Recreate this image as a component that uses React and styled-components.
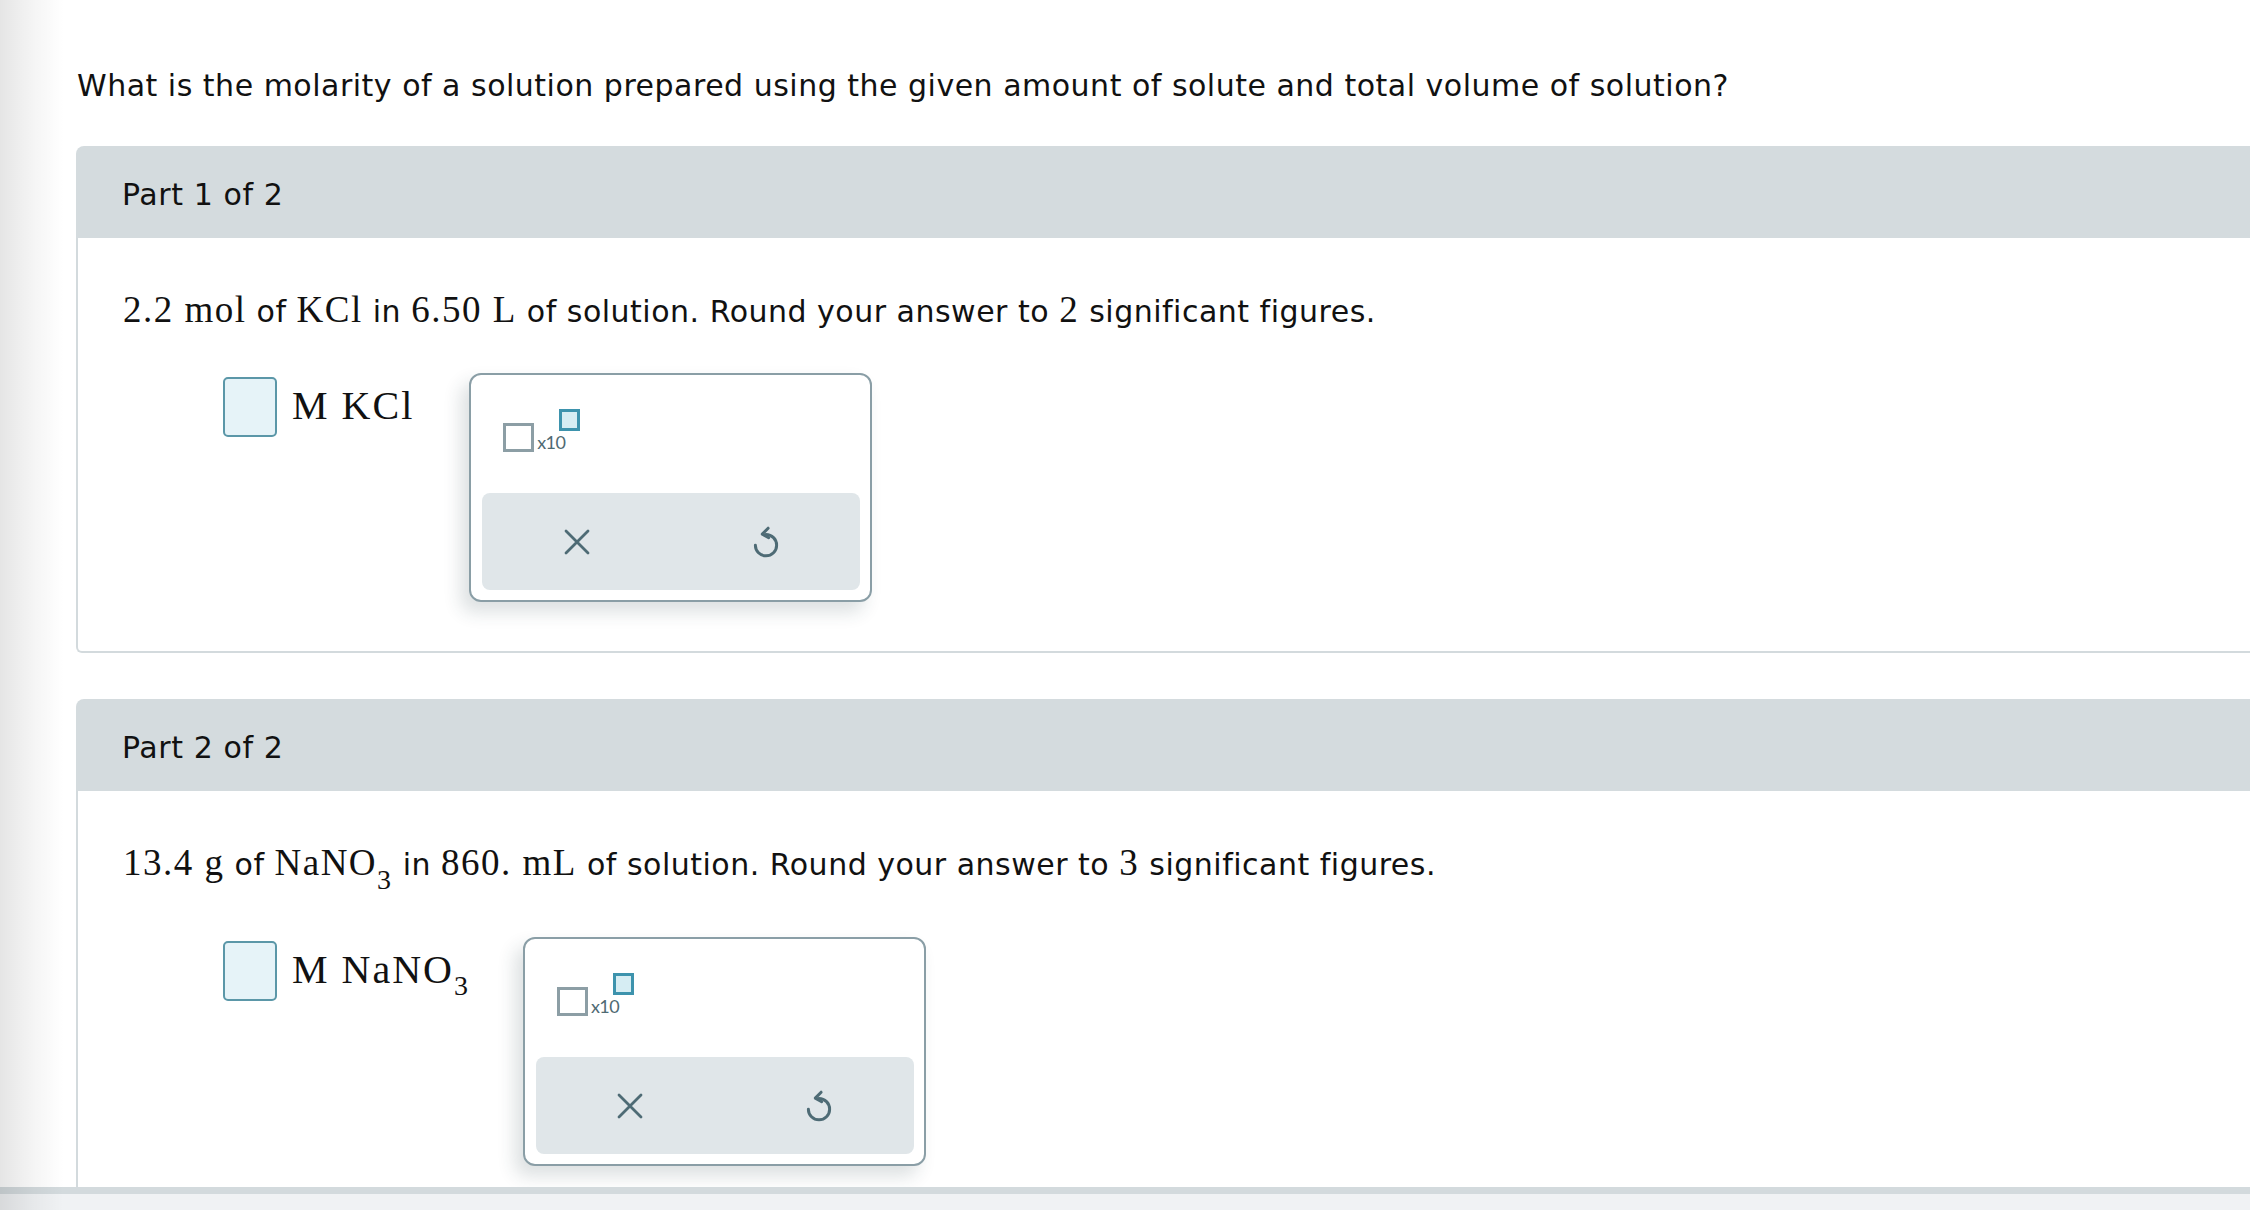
import React from 'react';
import styled, { createGlobalStyle } from 'styled-components';

const GlobalStyle = createGlobalStyle`
  html, body {
    margin: 0;
    padding: 0;
    background: #fff;
  }
  body {
    font-family: "DejaVu Sans", Verdana, sans-serif;
    color: #111;
  }
`;

const Shell = styled.div`
  position: relative;
  height: 100vh;
  display: flex;
  flex-direction: column;
  overflow: hidden;

  &::before {
    content: '';
    position: absolute;
    left: 0;
    top: 0;
    bottom: 0;
    width: 64px;
    background: linear-gradient(to right, rgba(0, 0, 0, 0.1), rgba(0, 0, 0, 0.04) 34px, rgba(0, 0, 0, 0));
    pointer-events: none;
    z-index: 5;
  }
`;

const Main = styled.main`
  flex: 1;
  min-height: 0;
  overflow: hidden;
  padding: 68px 0 0 76px;
`;

const Question = styled.p`
  margin: 0 0 42px 1px;
  font-size: 30px;
  line-height: 36px;
  letter-spacing: 0.5px;
`;

const Part = styled.section`
  margin-right: -40px;
  margin-bottom: 46px;
`;

const PartHeader = styled.div`
  background: #d4dbde;
  border-top-left-radius: 8px;
  padding: 31px 0 25px 46px;
  font-size: 30px;
  line-height: 36px;
  letter-spacing: 0.6px;
`;

const PartBody = styled.div`
  border-left: 2px solid #d3dadd;
  border-bottom: 2px solid #d3dadd;
  border-bottom-left-radius: 6px;
  padding: 52px 0 49px 45px;
`;

const Problem = styled.p`
  margin: 0;
  font-size: 30px;
  line-height: 44px;
  letter-spacing: 0.5px;
`;

const M = styled.span`
  font-family: "Liberation Serif", "Times New Roman", serif;
  font-size: 37px;
  line-height: 1;
  letter-spacing: 1.5px;
`;

const Sub = styled.sub`
  font-size: 28px;
  line-height: 36px;
  vertical-align: -14px;
`;

const AnswerRow = styled.div`
  display: flex;
  align-items: flex-start;
  margin-top: 39px;
  padding-left: 100px;
`;

const AnswerBox = styled.span`
  flex-shrink: 0;
  width: 54px;
  height: 60px;
  box-sizing: border-box;
  margin-top: 4px;
  border: 2px solid #5b97a8;
  border-radius: 5px;
  background: #e6f3f8;
`;

const Unit = styled.span`
  font-family: "Liberation Serif", "Times New Roman", serif;
  font-size: 40px;
  line-height: 40px;
  letter-spacing: 2px;
  margin: 13px 0 0 15px;
  white-space: nowrap;

  ${Sub} {
    line-height: 1;
    vertical-align: -12px;
    letter-spacing: 0;
  }
`;

const Keypad = styled.div`
  flex-shrink: 0;
  margin-left: 55px;
  width: 403px;
  height: 229px;
  box-sizing: border-box;
  border: 2px solid #8a9ea6;
  border-radius: 12px;
  background: #fff;
  box-shadow: -8px 10px 18px rgba(40, 60, 70, 0.16);
  display: flex;
  flex-direction: column;
  padding: 0 10px 10px 11px;
`;

const Sci = styled.div`
  display: flex;
  align-items: flex-start;
  height: 118px;
  box-sizing: border-box;
  padding: 34px 0 0 21px;
`;

const BaseSquare = styled.span`
  width: 31px;
  height: 29px;
  box-sizing: border-box;
  margin-top: 14px;
  border: 3px solid #8c9ea5;
`;

const Times10 = styled.span`
  font-family: Lato, "Open Sans", sans-serif;
  font-size: 18px;
  line-height: 1;
  letter-spacing: -0.6px;
  color: #4f6a73;
  margin: 24px 0 0 3px;
`;

const SupSquare = styled.span`
  width: 21px;
  height: 22px;
  box-sizing: border-box;
  margin-left: -6px;
  border: 3px solid #3d93ad;
  background: #d6edf3;
`;

const ButtonBar = styled.div`
  flex: 1;
  display: flex;
  background: #e0e6e9;
  border-radius: 8px;
`;

const KeyButton = styled.button`
  flex: 1;
  display: flex;
  align-items: center;
  justify-content: center;
  border: 0;
  background: transparent;
  padding: 0;
  color: #4e6b75;
  cursor: pointer;
`;

const Footer = styled.footer`
  flex-shrink: 0;
  height: 16px;
  border-top: 7px solid #d3dadd;
  background: #f0f2f4;
`;

const ClearIcon = () => (
  <svg width="26" height="26" viewBox="0 0 26 26" fill="none" stroke="currentColor" strokeWidth="2.8" strokeLinecap="round">
    <path d="M2 2L24 24M24 2L2 24" />
  </svg>
);

const UndoIcon = () => (
  <svg width="30" height="34" viewBox="0 0 28 32" fill="none" stroke="currentColor" strokeWidth="2.8" strokeLinecap="round" strokeLinejoin="round">
    <path d="M14 9A10 10 0 1 1 4 19" />
    <path d="M16 3L10.5 8.6L16.5 12" />
  </svg>
);

const AnswerKeypad = () => (
  <Keypad>
    <Sci>
      <BaseSquare />
      <Times10>x10</Times10>
      <SupSquare />
    </Sci>
    <ButtonBar>
      <KeyButton aria-label="clear">
        <ClearIcon />
      </KeyButton>
      <KeyButton aria-label="undo">
        <UndoIcon />
      </KeyButton>
    </ButtonBar>
  </Keypad>
);

const parts = [
  {
    n: 1,
    problem: (
      <>
        <M>2.2 mol</M> of <M>KCl</M> in <M>6.50 L</M> of solution. Round your answer to <M>2</M> significant figures.
      </>
    ),
    unit: <>M KCl</>,
  },
  {
    n: 2,
    problem: (
      <>
        <M>13.4 g</M> of <M>NaNO<Sub>3</Sub></M> in <M>860. mL</M> of solution. Round your answer to <M>3</M> significant figures.
      </>
    ),
    unit: <>M NaNO<Sub>3</Sub></>,
  },
];

export default function App() {
  return (
    <Shell>
      <GlobalStyle />
      <Main>
        <Question>
          What is the molarity of a solution prepared using the given amount of solute and total volume of solution?
        </Question>
        {parts.map(({ n, problem, unit }) => (
          <Part key={`part__${n}`}>
            <PartHeader>Part {n} of 2</PartHeader>
            <PartBody>
              <Problem>{problem}</Problem>
              <AnswerRow>
                <AnswerBox />
                <Unit>{unit}</Unit>
                <AnswerKeypad />
              </AnswerRow>
            </PartBody>
          </Part>
        ))}
      </Main>
      <Footer />
    </Shell>
  );
}
